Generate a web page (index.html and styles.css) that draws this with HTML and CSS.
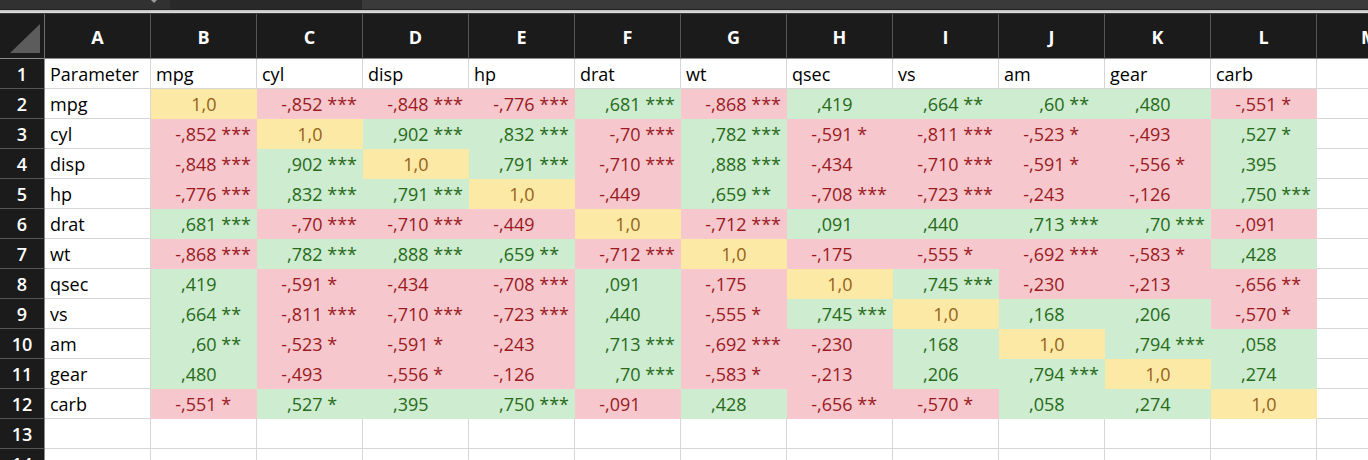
FILE: index.html
```html
<!DOCTYPE html>
<html>
<head>
<meta charset="utf-8">
<title>Correlation matrix</title>
<link rel="stylesheet" href="styles.css">
</head>
<body>
<div class="toolbar">
  <div class="tb-name"><span class="tb-arrow"></span></div>
  <div class="tb-gap"></div>
  <div class="tb-formula"></div>
</div>
<div class="divider"></div>
<div class="sheet">
  <div class="ch corner"><svg width="44" height="44" viewBox="0 0 44 44"><polygon points="10,39 40,39 40,10" fill="#5c5c5c"/></svg></div>
  <div class="ch">A</div><div class="ch">B</div><div class="ch">C</div><div class="ch">D</div><div class="ch">E</div><div class="ch">F</div><div class="ch">G</div><div class="ch">H</div><div class="ch">I</div><div class="ch">J</div><div class="ch">K</div><div class="ch">L</div><div class="ch">M</div>

  <div class="rh">1</div>
  <div class="c">Parameter</div><div class="c">mpg</div><div class="c">cyl</div><div class="c">disp</div><div class="c">hp</div><div class="c">drat</div><div class="c">wt</div><div class="c">qsec</div><div class="c">vs</div><div class="c">am</div><div class="c">gear</div><div class="c">carb</div><div class="c"></div>

  <div class="rh">2</div>
  <div class="c">mpg</div>
  <div class="c n y">1,0<i> ***</i></div>
  <div class="c n r">-,852 ***</div>
  <div class="c n r">-,848 ***</div>
  <div class="c n r">-,776 ***</div>
  <div class="c n g">,681 ***</div>
  <div class="c n r">-,868 ***</div>
  <div class="c n g">,419<i> ***</i></div>
  <div class="c n g">,664 **<i>*</i></div>
  <div class="c n g">,60 **<i>*</i></div>
  <div class="c n g">,480<i> ***</i></div>
  <div class="c n r">-,551 *<i>**</i></div>
  <div class="c"></div>

  <div class="rh">3</div>
  <div class="c">cyl</div>
  <div class="c n r">-,852 ***</div>
  <div class="c n y">1,0<i> ***</i></div>
  <div class="c n g">,902 ***</div>
  <div class="c n g">,832 ***</div>
  <div class="c n r">-,70 ***</div>
  <div class="c n g">,782 ***</div>
  <div class="c n r">-,591 *<i>**</i></div>
  <div class="c n r">-,811 ***</div>
  <div class="c n r">-,523 *<i>**</i></div>
  <div class="c n r">-,493<i> ***</i></div>
  <div class="c n g">,527 *<i>**</i></div>
  <div class="c"></div>

  <div class="rh">4</div>
  <div class="c">disp</div>
  <div class="c n r">-,848 ***</div>
  <div class="c n g">,902 ***</div>
  <div class="c n y">1,0<i> ***</i></div>
  <div class="c n g">,791 ***</div>
  <div class="c n r">-,710 ***</div>
  <div class="c n g">,888 ***</div>
  <div class="c n r">-,434<i> ***</i></div>
  <div class="c n r">-,710 ***</div>
  <div class="c n r">-,591 *<i>**</i></div>
  <div class="c n r">-,556 *<i>**</i></div>
  <div class="c n g">,395<i> ***</i></div>
  <div class="c"></div>

  <div class="rh">5</div>
  <div class="c">hp</div>
  <div class="c n r">-,776 ***</div>
  <div class="c n g">,832 ***</div>
  <div class="c n g">,791 ***</div>
  <div class="c n y">1,0<i> ***</i></div>
  <div class="c n r">-,449<i> ***</i></div>
  <div class="c n g">,659 **<i>*</i></div>
  <div class="c n r">-,708 ***</div>
  <div class="c n r">-,723 ***</div>
  <div class="c n r">-,243<i> ***</i></div>
  <div class="c n r">-,126<i> ***</i></div>
  <div class="c n g">,750 ***</div>
  <div class="c"></div>

  <div class="rh">6</div>
  <div class="c">drat</div>
  <div class="c n g">,681 ***</div>
  <div class="c n r">-,70 ***</div>
  <div class="c n r">-,710 ***</div>
  <div class="c n r">-,449<i> ***</i></div>
  <div class="c n y">1,0<i> ***</i></div>
  <div class="c n r">-,712 ***</div>
  <div class="c n g">,091<i> ***</i></div>
  <div class="c n g">,440<i> ***</i></div>
  <div class="c n g">,713 ***</div>
  <div class="c n g">,70 ***</div>
  <div class="c n r">-,091<i> ***</i></div>
  <div class="c"></div>

  <div class="rh">7</div>
  <div class="c">wt</div>
  <div class="c n r">-,868 ***</div>
  <div class="c n g">,782 ***</div>
  <div class="c n g">,888 ***</div>
  <div class="c n g">,659 **<i>*</i></div>
  <div class="c n r">-,712 ***</div>
  <div class="c n y">1,0<i> ***</i></div>
  <div class="c n r">-,175<i> ***</i></div>
  <div class="c n r">-,555 *<i>**</i></div>
  <div class="c n r">-,692 ***</div>
  <div class="c n r">-,583 *<i>**</i></div>
  <div class="c n g">,428<i> ***</i></div>
  <div class="c"></div>

  <div class="rh">8</div>
  <div class="c">qsec</div>
  <div class="c n g">,419<i> ***</i></div>
  <div class="c n r">-,591 *<i>**</i></div>
  <div class="c n r">-,434<i> ***</i></div>
  <div class="c n r">-,708 ***</div>
  <div class="c n g">,091<i> ***</i></div>
  <div class="c n r">-,175<i> ***</i></div>
  <div class="c n y">1,0<i> ***</i></div>
  <div class="c n g">,745 ***</div>
  <div class="c n r">-,230<i> ***</i></div>
  <div class="c n r">-,213<i> ***</i></div>
  <div class="c n r">-,656 **<i>*</i></div>
  <div class="c"></div>

  <div class="rh">9</div>
  <div class="c">vs</div>
  <div class="c n g">,664 **<i>*</i></div>
  <div class="c n r">-,811 ***</div>
  <div class="c n r">-,710 ***</div>
  <div class="c n r">-,723 ***</div>
  <div class="c n g">,440<i> ***</i></div>
  <div class="c n r">-,555 *<i>**</i></div>
  <div class="c n g">,745 ***</div>
  <div class="c n y">1,0<i> ***</i></div>
  <div class="c n g">,168<i> ***</i></div>
  <div class="c n g">,206<i> ***</i></div>
  <div class="c n r">-,570 *<i>**</i></div>
  <div class="c"></div>

  <div class="rh">10</div>
  <div class="c">am</div>
  <div class="c n g">,60 **<i>*</i></div>
  <div class="c n r">-,523 *<i>**</i></div>
  <div class="c n r">-,591 *<i>**</i></div>
  <div class="c n r">-,243<i> ***</i></div>
  <div class="c n g">,713 ***</div>
  <div class="c n r">-,692 ***</div>
  <div class="c n r">-,230<i> ***</i></div>
  <div class="c n g">,168<i> ***</i></div>
  <div class="c n y">1,0<i> ***</i></div>
  <div class="c n g">,794 ***</div>
  <div class="c n g">,058<i> ***</i></div>
  <div class="c"></div>

  <div class="rh">11</div>
  <div class="c">gear</div>
  <div class="c n g">,480<i> ***</i></div>
  <div class="c n r">-,493<i> ***</i></div>
  <div class="c n r">-,556 *<i>**</i></div>
  <div class="c n r">-,126<i> ***</i></div>
  <div class="c n g">,70 ***</div>
  <div class="c n r">-,583 *<i>**</i></div>
  <div class="c n r">-,213<i> ***</i></div>
  <div class="c n g">,206<i> ***</i></div>
  <div class="c n g">,794 ***</div>
  <div class="c n y">1,0<i> ***</i></div>
  <div class="c n g">,274<i> ***</i></div>
  <div class="c"></div>

  <div class="rh">12</div>
  <div class="c">carb</div>
  <div class="c n r">-,551 *<i>**</i></div>
  <div class="c n g">,527 *<i>**</i></div>
  <div class="c n g">,395<i> ***</i></div>
  <div class="c n g">,750 ***</div>
  <div class="c n r">-,091<i> ***</i></div>
  <div class="c n g">,428<i> ***</i></div>
  <div class="c n r">-,656 **<i>*</i></div>
  <div class="c n r">-,570 *<i>**</i></div>
  <div class="c n g">,058<i> ***</i></div>
  <div class="c n g">,274<i> ***</i></div>
  <div class="c n y">1,0<i> ***</i></div>
  <div class="c"></div>

  <div class="rh">13</div>
  <div class="c"></div><div class="c"></div><div class="c"></div><div class="c"></div><div class="c"></div><div class="c"></div><div class="c"></div><div class="c"></div><div class="c"></div><div class="c"></div><div class="c"></div><div class="c"></div><div class="c"></div>

  <div class="rh">14</div>
  <div class="c"></div><div class="c"></div><div class="c"></div><div class="c"></div><div class="c"></div><div class="c"></div><div class="c"></div><div class="c"></div><div class="c"></div><div class="c"></div><div class="c"></div><div class="c"></div><div class="c"></div>
</div>
</body>
</html>
```
FILE: styles.css
```css
html, body {
  margin: 0;
  padding: 0;
  background: #ffffff;
}
body {
  width: 1368px;
  height: 460px;
  overflow: hidden;
  font-family: "Open Sans", "Noto Sans", "Liberation Sans", sans-serif;
}
.toolbar {
  display: flex;
  height: 9px;
}
.tb-name {
  width: 170px;
  background: #313131;
  position: relative;
}
.tb-arrow {
  position: absolute;
  left: 151px;
  top: 0;
  width: 0;
  height: 0;
  border-left: 3px solid transparent;
  border-right: 3px solid transparent;
  border-top: 3px solid #9a9a9a;
}
.tb-gap {
  width: 192px;
  background: #292929;
}
.tb-formula {
  flex: 1;
  background: #3a3a3a;
}
.divider {
  height: 5px;
  box-sizing: border-box;
  border-top: 1px solid #222222;
  border-bottom: 1px solid #3a3a3a;
  background: linear-gradient(#bdbdbd, #e2e2e2);
}
.sheet {
  display: grid;
  grid-template-columns: 45px repeat(13, 106px);
  grid-template-rows: 45px repeat(14, 30px);
  width: 1423px;
}
.sheet > div {
  box-sizing: border-box;
  display: flex;
  align-items: center;
  overflow: hidden;
  white-space: pre;
  font-size: 18px;
}
.ch {
  background: #1b1b1b;
  color: #ffffff;
  font-weight: 700;
  justify-content: center;
  border-right: 1px solid #565656;
  border-bottom: 1px solid #8c8c8c;
  padding-top: 2px;
}
.corner {
  padding-top: 0 !important;
  align-items: flex-start !important;
  border-right-color: #6d6d6d !important;
}
.rh {
  background: #1b1b1b;
  color: #ffffff;
  font-weight: 600;
  justify-content: center;
  border-right: 1px solid #8a8a8a;
  border-bottom: 1px solid #555555;
}
.c {
  color: #000000;
  padding: 0 5px;
  border-right: 1px solid #d6d6d6;
  border-bottom: 1px solid #d6d6d6;
}
.n {
  justify-content: flex-end;
}
.n i {
  font-style: normal;
  visibility: hidden;
}
.r {
  background: #f6c8cd;
  color: #9a1a1f;
  border-color: #f6c8cd;
}
.g {
  background: #ceeccf;
  color: #276a1a;
  border-color: #ceeccf;
}
.y {
  background: #fbe9a5;
  color: #96621a;
  border-color: #fbe9a5;
}
```
